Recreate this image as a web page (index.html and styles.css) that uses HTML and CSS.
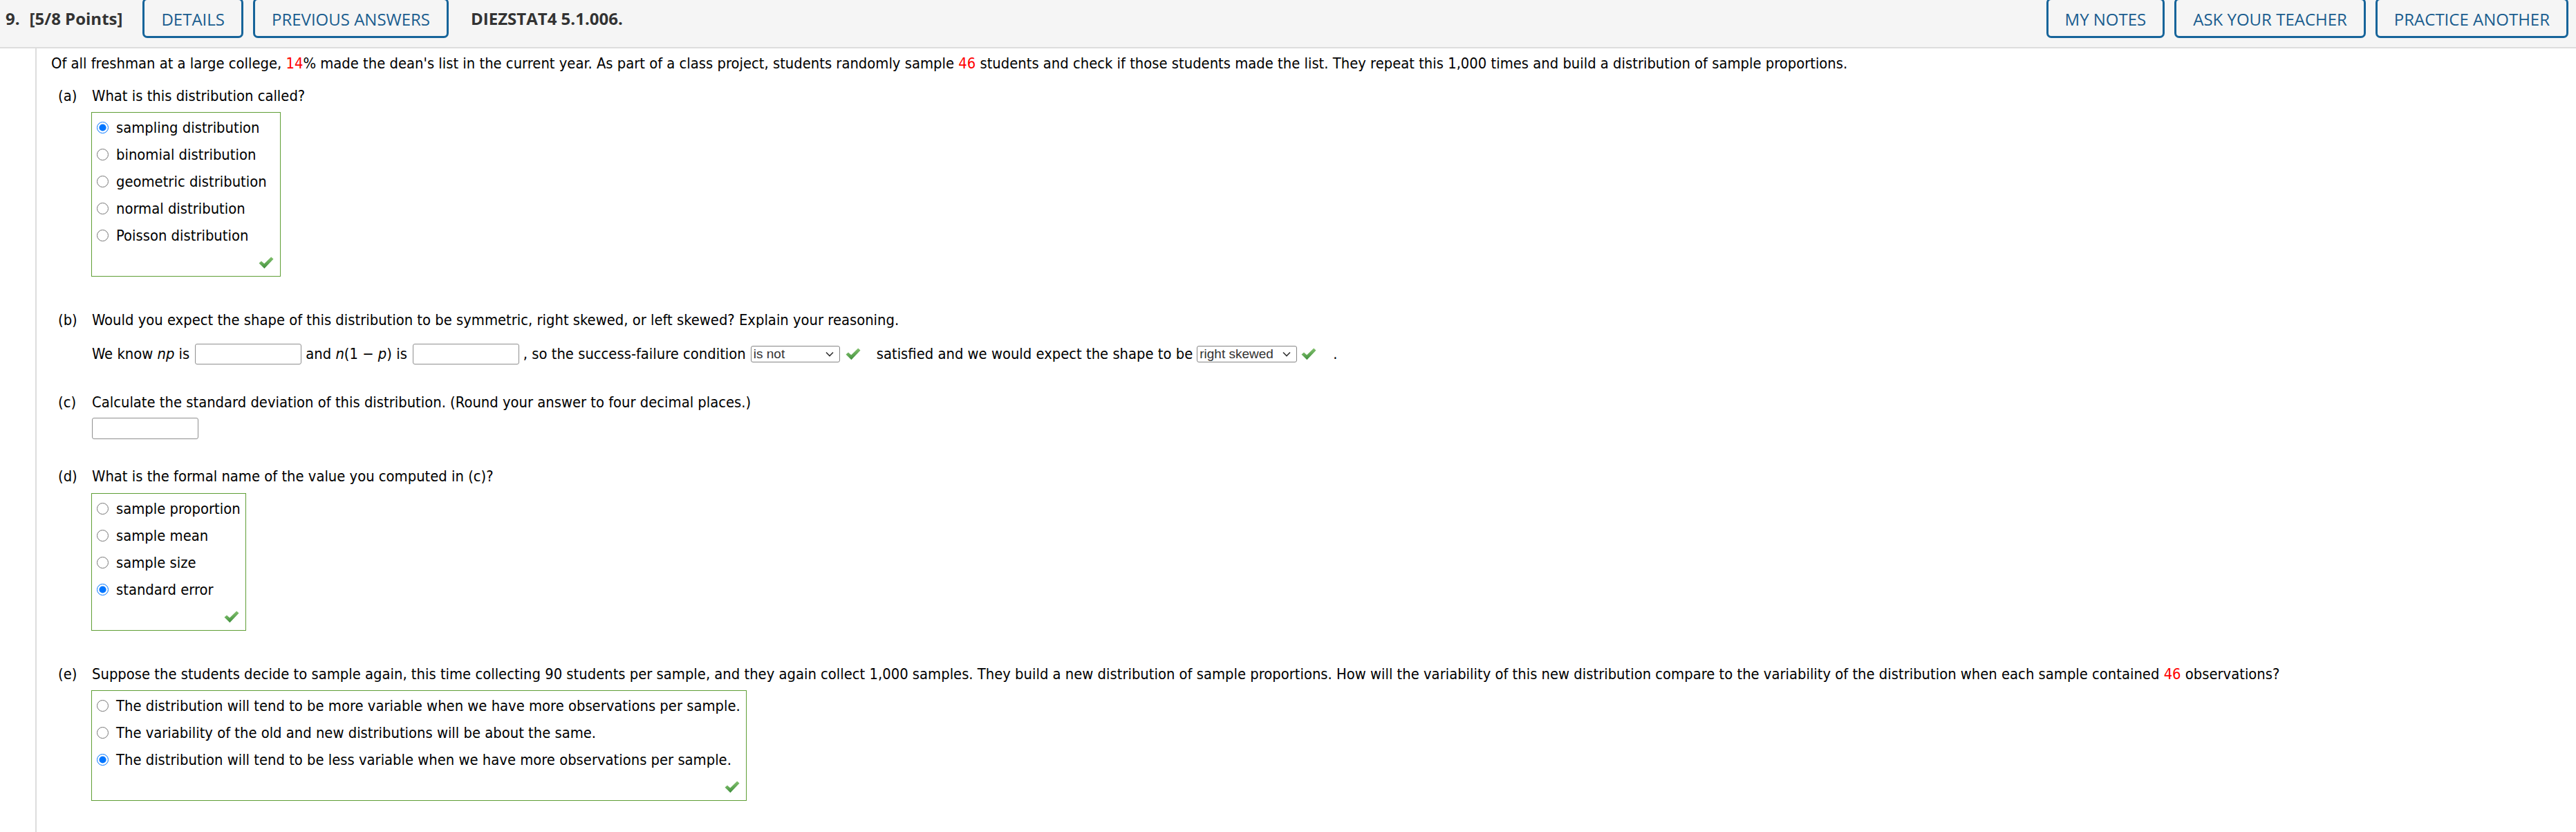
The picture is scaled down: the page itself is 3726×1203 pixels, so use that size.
FILE: index.html
```html
<!DOCTYPE html>
<html lang="en">
<head>
<meta charset="utf-8">
<title>DIEZSTAT4 5.1.006</title>
<link rel="stylesheet" href="styles.css">
</head>
<body>
<div class="page">
  <header class="qhead">
    <div class="qhead-group">
      <span class="qnum"><span class="qnum-n">9.</span>[5/8 Points]</span>
      <button class="hbtn" type="button">DETAILS</button>
      <button class="hbtn" type="button">PREVIOUS ANSWERS</button>
      <span class="qid">DIEZSTAT4 5.1.006.</span>
    </div>
    <div class="qhead-group">
      <button class="hbtn" type="button">MY NOTES</button>
      <button class="hbtn" type="button">ASK YOUR TEACHER</button>
      <button class="hbtn" type="button">PRACTICE ANOTHER</button>
    </div>
  </header>

  <main class="qbody">
    <p class="intro">Of all freshman at a large college, <span class="red">14</span>% made the dean's list in the current year. As part of a class project, students randomly sample <span class="red">46</span> students and check if those students made the list. They repeat this 1,000 times and build a distribution of sample proportions.</p>

    <ol class="parts">
      <li class="part">
        <span class="plabel">(a)</span>
        <div class="pcontent">
          <div class="q">What is this distribution called?</div>
          <div class="choices choices-a">
            <label class="choice"><input type="radio" name="pa" checked><span>sampling distribution</span></label>
            <label class="choice"><input type="radio" name="pa"><span>binomial distribution</span></label>
            <label class="choice"><input type="radio" name="pa"><span>geometric distribution</span></label>
            <label class="choice"><input type="radio" name="pa"><span>normal distribution</span></label>
            <label class="choice"><input type="radio" name="pa"><span>Poisson distribution</span></label>
            <div class="choice-check">
              <svg class="chk" viewBox="0 0 22 18"><defs><linearGradient id="g1" x1="0" y1="0" x2="0.3" y2="1"><stop offset="0" stop-color="#9ad27f"/><stop offset="1" stop-color="#3f8f3c"/></linearGradient></defs><path d="M0.5 9.5 L4 6.5 L8.2 10.3 L18.2 0.5 L21.5 3.6 L8.4 17.3 Z" fill="url(#g1)"/></svg>
            </div>
          </div>
        </div>
      </li>

      <li class="part">
        <span class="plabel">(b)</span>
        <div class="pcontent">
          <div class="q">Would you expect the shape of this distribution to be symmetric, right skewed, or left skewed? Explain your reasoning.</div>
          <div class="fill-row">
            <span>We know <i>np</i> is</span>
            <input class="tbox" type="text">
            <span>and <i>n</i>(1 &minus; <i>p</i>) is</span>
            <input class="tbox" type="text">
            <span>, so the success-failure condition</span>
            <select class="sel sel-short"><option>is not</option></select>
            <svg class="chk chk-row" viewBox="0 0 22 18"><path d="M0.5 9.5 L4 6.5 L8.2 10.3 L18.2 0.5 L21.5 3.6 L8.4 17.3 Z" fill="url(#g1)"/></svg>
            <span>satisfied and we would expect the shape to be</span>
            <select class="sel sel-long"><option>right skewed</option></select>
            <svg class="chk chk-row2" viewBox="0 0 22 18"><path d="M0.5 9.5 L4 6.5 L8.2 10.3 L18.2 0.5 L21.5 3.6 L8.4 17.3 Z" fill="url(#g1)"/></svg>
            <span>.</span>
          </div>
        </div>
      </li>

      <li class="part">
        <span class="plabel">(c)</span>
        <div class="pcontent">
          <div class="q">Calculate the standard deviation of this distribution. (Round your answer to four decimal places.)</div>
          <input class="tbox tbox-c" type="text">
        </div>
      </li>

      <li class="part">
        <span class="plabel">(d)</span>
        <div class="pcontent">
          <div class="q">What is the formal name of the value you computed in (c)?</div>
          <div class="choices choices-d">
            <label class="choice"><input type="radio" name="pd"><span>sample proportion</span></label>
            <label class="choice"><input type="radio" name="pd"><span>sample mean</span></label>
            <label class="choice"><input type="radio" name="pd"><span>sample size</span></label>
            <label class="choice"><input type="radio" name="pd" checked><span>standard error</span></label>
            <div class="choice-check">
              <svg class="chk" viewBox="0 0 22 18"><path d="M0.5 9.5 L4 6.5 L8.2 10.3 L18.2 0.5 L21.5 3.6 L8.4 17.3 Z" fill="url(#g1)"/></svg>
            </div>
          </div>
        </div>
      </li>

      <li class="part">
        <span class="plabel">(e)</span>
        <div class="pcontent">
          <div class="q">Suppose the students decide to sample again, this time collecting 90 students per sample, and they again collect 1,000 samples. They build a new distribution of sample proportions. How will the variability of this new distribution compare to the variability of the distribution when each sample contained <span class="red">46</span> observations?</div>
          <div class="choices choices-e">
            <label class="choice"><input type="radio" name="pe"><span>The distribution will tend to be more variable when we have more observations per sample.</span></label>
            <label class="choice"><input type="radio" name="pe"><span>The variability of the old and new distributions will be about the same.</span></label>
            <label class="choice"><input type="radio" name="pe" checked><span>The distribution will tend to be less variable when we have more observations per sample.</span></label>
            <div class="choice-check">
              <svg class="chk" viewBox="0 0 22 18"><path d="M0.5 9.5 L4 6.5 L8.2 10.3 L18.2 0.5 L21.5 3.6 L8.4 17.3 Z" fill="url(#g1)"/></svg>
            </div>
          </div>
        </div>
      </li>
    </ol>
  </main>
</div>
</body>
</html>
```

FILE: styles.css
```css
* { box-sizing: border-box; }

html, body {
  margin: 0;
  padding: 0;
  background: #ffffff;
}

body {
  font-family: "DejaVu Sans Condensed", "DejaVu Sans", Verdana, sans-serif;
  font-size: 21.8px;
  color: #000000;
}

.page {
  display: flex;
  flex-direction: column;
  min-height: calc(100vh + 7px);
  margin-top: -7px;
}

/* ---------- header ---------- */
.qhead {
  display: flex;
  justify-content: space-between;
  align-items: flex-start;
  background: #f5f5f5;
  border-bottom: 2px solid #dddddd;
  padding: 4px 11px 13px 8px;
  font-family: "Open Sans", "DejaVu Sans", sans-serif;
}

.qhead-group {
  display: flex;
  align-items: center;
  gap: 14px;
}

.qnum {
  font-weight: 700;
  font-size: 24px;
  color: #333333;
  margin-right: 15px;
}

.qnum-n {
  margin-right: 14px;
}

.qid {
  font-weight: 700;
  font-size: 24px;
  color: #333333;
  margin-left: 18px;
}

.hbtn {
  height: 58px;
  padding: 4px 24px 0;
  border: 3px solid #16649a;
  border-radius: 7px;
  background: #f5f5f5;
  color: #1a5d8f;
  font-family: "Open Sans", "DejaVu Sans", sans-serif;
  font-size: 24px;
  font-weight: 500;
  line-height: 1;
}

/* ---------- body ---------- */
.qbody {
  flex: 1;
  margin-left: 51px;
  border-left: 2px solid #dddddd;
  padding: 6px 0 0 21px;
  line-height: 32px;
}

.intro {
  margin: 0;
}

.red {
  color: #ff0000;
}

.parts {
  list-style: none;
  margin: 15px 0 0 10px;
  padding: 0;
}

.part {
  display: grid;
  grid-template-columns: 49px 1fr;
  margin-bottom: 38px;
}

.plabel {
  display: block;
}

.pcontent {
  min-width: 0;
}

/* choices boxes */
.choices {
  margin: 7px 0 9px -1px;
  border: 1px solid #5f9e35;
  padding: 2px 9px 0 7px;
}

.choices-a { width: 274px; }
.choices-d { width: 224px; margin-top: 8px; }
.choices-e { width: 948px; }

.choice {
  display: flex;
  align-items: center;
  height: 39px;
  white-space: nowrap;
}

.choice input[type="radio"] {
  width: 17px;
  height: 17px;
  margin: 0 11px 0 0;
  flex: none;
}

.choice-check {
  height: 39px;
  display: flex;
  justify-content: flex-end;
  align-items: center;
}

.chk {
  width: 22px;
  height: 18px;
  display: block;
}

/* fill-in row */
.fill-row {
  display: flex;
  align-items: center;
  height: 32px;
  margin-top: 17px;
  white-space: nowrap;
}

.tbox {
  width: 154px;
  height: 30px;
  border: 1px solid #8f8f8f;
  border-radius: 3px;
  background: #ffffff;
  margin: 0 6px 0 8px;
  padding: 0;
  font: inherit;
}

.tbox-c {
  display: block;
  margin: 6px 0 0 0;
  height: 31px;
}

.sel {
  -webkit-appearance: none;
  appearance: none;
  height: 24px;
  margin-left: 7px;
  border: 1px solid #858585;
  border-radius: 3px;
  background-color: #ffffff;
  background-image: url("data:image/svg+xml,%3Csvg xmlns='http://www.w3.org/2000/svg' width='12' height='8' viewBox='0 0 12 8'%3E%3Cpath d='M1 1.5 L6 6.5 L11 1.5' fill='none' stroke='%23333' stroke-width='1.6'/%3E%3C/svg%3E");
  background-repeat: no-repeat;
  background-position: right 8px center;
  background-size: 12px 8px;
  font-family: "Liberation Sans", Arial, sans-serif;
  font-size: 19px;
  color: #333333;
  padding: 0 0 0 3px;
  line-height: 22px;
}

.sel-short { width: 129px; }
.sel-long { width: 145px; margin-left: 6px; }

.chk-row { margin: 0 23px 0 8px; }
.chk-row2 { margin: 0 24px 0 6px; }
```
